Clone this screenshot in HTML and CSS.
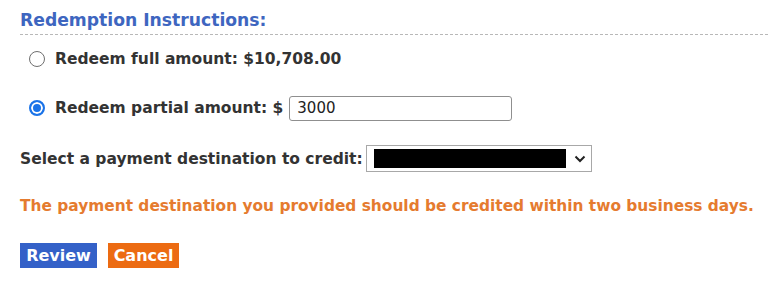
FILE: index.html
```html
<!DOCTYPE html>
<html>
<head>
<meta charset="utf-8">
<link rel="stylesheet" href="styles.css">
</head>
<body>
<div class="page">
  <h2 class="title">Redemption Instructions:</h2>
  <div class="row radio-row first">
    <span class="radio"></span>
    <span class="label">Redeem full amount: $10,708.00</span>
  </div>
  <div class="row radio-row second">
    <span class="radio checked"></span>
    <span class="label">Redeem partial amount: $</span>
    <span class="input">3000</span>
  </div>
  <div class="row select-row">
    <span class="label">Select a payment destination to credit:</span>
    <span class="select">
      <span class="redacted"></span>
      <svg class="chev" width="12" height="8" viewBox="0 0 12 8"><path d="M1.5 1.5 L6 6 L10.5 1.5" fill="none" stroke="#222" stroke-width="2"/></svg>
    </span>
  </div>
  <p class="note">The payment destination you provided should be credited within two business days.</p>
  <div class="buttons">
    <span class="btn review">Review</span>
    <span class="btn cancel">Cancel</span>
  </div>
</div>
</body>
</html>
```

FILE: styles.css
```css
html, body { margin: 0; padding: 0; background: #fff; }
body { font-family: "DejaVu Sans", Verdana, sans-serif; }
.page { padding: 9px 0 0 20px; }
.title {
  margin: 0;
  font-size: 17.2px;
  font-weight: bold;
  color: #3e66c0;
  line-height: 23px;
  padding-bottom: 2px;
  border-bottom: 1px dashed #b8b8b8;
}
.row { display: flex; align-items: center; }
.label { font-size: 15.5px; font-weight: bold; color: #333; }
.radio-row.first { margin-top: 15px; height: 18px; }
.radio-row.second { margin-top: 27px; height: 26px; }
.radio {
  width: 16px; height: 16px; border-radius: 50%;
  border: 1px solid #6f6f6f; box-sizing: border-box;
  margin: 0 10px 0 9px; background: #fff;
}
.radio.checked { border: 2px solid #1a73e8; background: #1a73e8; box-shadow: inset 0 0 0 2px #fff; }
.input {
  margin-left: 6px;
  width: 223px; height: 25px; box-sizing: border-box;
  border: 1px solid #8f8f8f; border-radius: 3px;
  font-family: "DejaVu Sans", sans-serif; font-size: 15px; color: #222;
  padding-left: 7px; display: flex; align-items: center;
}
.select-row { margin-top: 24px; height: 27px; }
.select {
  margin-left: 3px;
  width: 226px; height: 27px; box-sizing: border-box;
  border: 1px solid #a8a8a8;
  display: flex; align-items: center; padding-left: 7px;
}
.redacted { width: 192px; height: 19px; background: #000; }
.chev { margin-left: 8px; }
.note {
  margin: 25px 0 0 0;
  font-size: 15.4px; font-weight: bold; color: #e57b2f;
  line-height: 18px;
}
.buttons { display: flex; gap: 11px; margin-top: 28px; }
.btn {
  height: 25px; display: flex; align-items: center; justify-content: center;
  font-size: 16px; font-weight: bold; color: #fff;
}
.review { background: #3461c8; width: 77px; }
.cancel { background: #ec6b12; width: 71px; }
```
